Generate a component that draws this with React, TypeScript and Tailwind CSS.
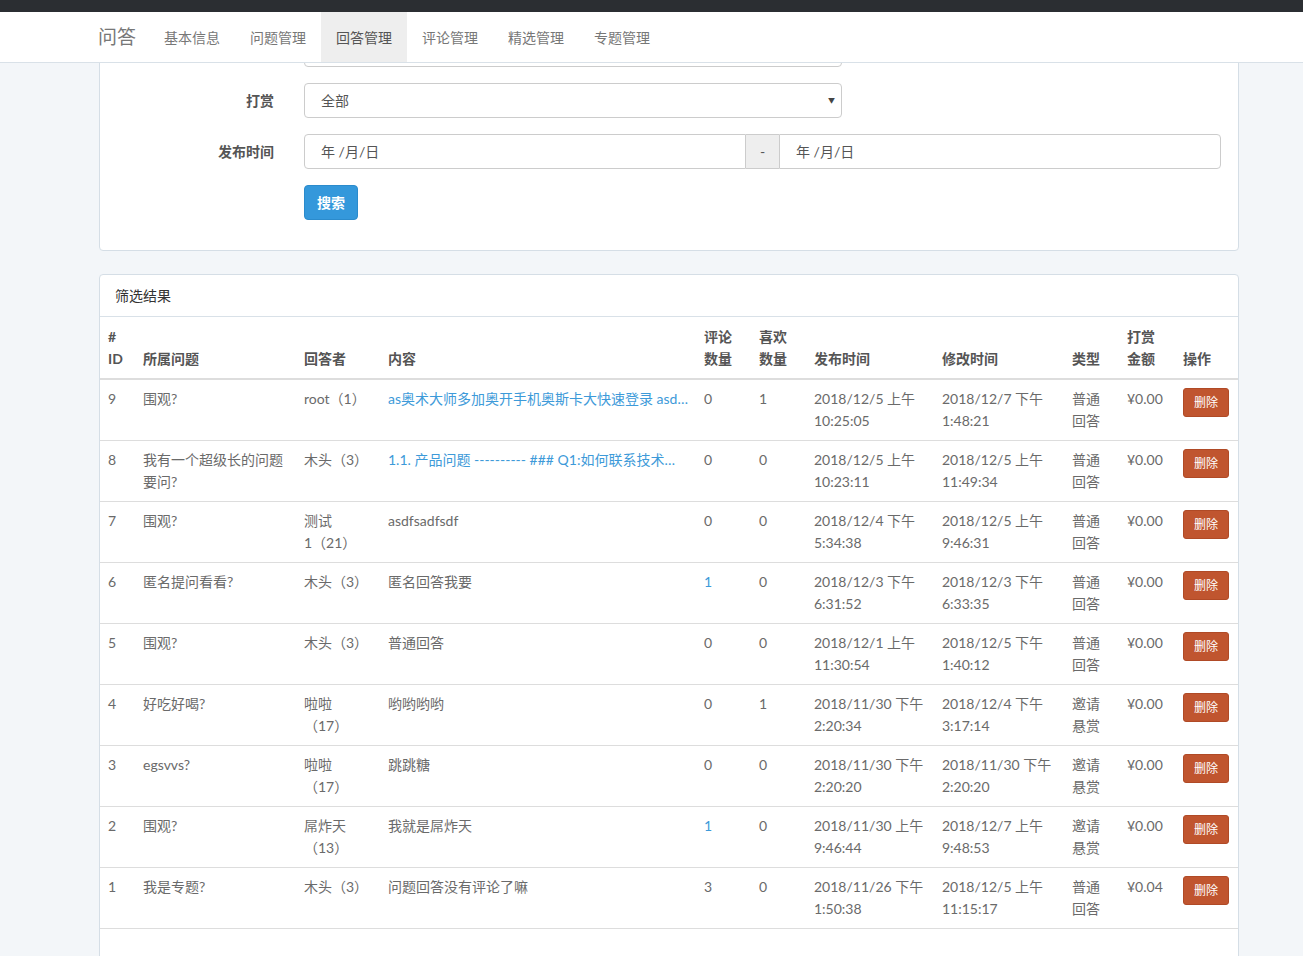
const FONT = { fontFamily: '"Lato", "Noto Sans CJK SC", sans-serif' };

type Row = {
  id: string;
  q: string;
  a: string[];
  c: string;
  cLink?: boolean;
  cm: string;
  cmLink?: boolean;
  like: string;
  pub: string[];
  mod: string[];
  type: string;
  amt: string;
};

const rows: Row[] = [
  { id: '9', q: '围观?', a: ['root（1）'], c: 'as奥术大师多加奥开手机奥斯卡大快速登录 asdasdasdasd', cLink: true, cm: '0', like: '1', pub: ['2018/12/5 上午', '10:25:05'], mod: ['2018/12/7 下午', '1:48:21'], type: '普通回答', amt: '¥0.00' },
  { id: '8', q: '我有一个超级长的问题要问?', a: ['木头（3）'], c: '1.1. 产品问题 ---------- ### Q1:如何联系技术支持', cLink: true, cm: '0', like: '0', pub: ['2018/12/5 上午', '10:23:11'], mod: ['2018/12/5 上午', '11:49:34'], type: '普通回答', amt: '¥0.00' },
  { id: '7', q: '围观?', a: ['测试', '1（21）'], c: 'asdfsadfsdf', cm: '0', like: '0', pub: ['2018/12/4 下午', '5:34:38'], mod: ['2018/12/5 上午', '9:46:31'], type: '普通回答', amt: '¥0.00' },
  { id: '6', q: '匿名提问看看?', a: ['木头（3）'], c: '匿名回答我要', cm: '1', cmLink: true, like: '0', pub: ['2018/12/3 下午', '6:31:52'], mod: ['2018/12/3 下午', '6:33:35'], type: '普通回答', amt: '¥0.00' },
  { id: '5', q: '围观?', a: ['木头（3）'], c: '普通回答', cm: '0', like: '0', pub: ['2018/12/1 上午', '11:30:54'], mod: ['2018/12/5 下午', '1:40:12'], type: '普通回答', amt: '¥0.00' },
  { id: '4', q: '好吃好喝?', a: ['啦啦', '（17）'], c: '哟哟哟哟', cm: '0', like: '1', pub: ['2018/11/30 下午', '2:20:34'], mod: ['2018/12/4 下午', '3:17:14'], type: '邀请悬赏', amt: '¥0.00' },
  { id: '3', q: 'egsvvs?', a: ['啦啦', '（17）'], c: '跳跳糖', cm: '0', like: '0', pub: ['2018/11/30 下午', '2:20:20'], mod: ['2018/11/30 下午', '2:20:20'], type: '邀请悬赏', amt: '¥0.00' },
  { id: '2', q: '围观?', a: ['屌炸天', '（13）'], c: '我就是屌炸天', cm: '1', cmLink: true, like: '0', pub: ['2018/11/30 上午', '9:46:44'], mod: ['2018/12/7 上午', '9:48:53'], type: '邀请悬赏', amt: '¥0.00' },
  { id: '1', q: '我是专题?', a: ['木头（3）'], c: '问题回答没有评论了嘛', cm: '3', like: '0', pub: ['2018/11/26 下午', '1:50:38'], mod: ['2018/12/5 上午', '11:15:17'], type: '普通回答', amt: '¥0.04' },
];

const navItems = ['基本信息', '问题管理', '回答管理', '评论管理', '精选管理', '专题管理'];

function Lines({ items }: { items: string[] }) {
  return (
    <>
      {items.map((t, i) => (
        <div key={i} className="whitespace-nowrap">
          {t}
        </div>
      ))}
    </>
  );
}

function Select({ value, width }: { value: string; width: string }) {
  return (
    <div className={`${width} h-[35px] border border-[#cccccc] rounded-[4px] bg-white flex items-center justify-between pl-4 pr-[6px] text-[14px] text-[#555]`}>
      <span>{value}</span>
      <span className="text-[7px] text-[#444]">▼</span>
    </div>
  );
}

export default function App() {
  return (
    <div style={FONT} className="w-[1303px] h-[956px] overflow-hidden bg-[#f3f6f9] text-[14px]">
      {/* top bar */}
      <div className="h-[12px] bg-[#2b2e32]" />

      {/* nav */}
      <div className="h-[51px] bg-white border-b border-[#d9e1e8] flex pl-[83px]">
        <div className="pl-[15px] pr-[13px] flex items-center text-[19px] text-[#777]">问答</div>
        {navItems.map((n) => (
          <div
            key={n}
            className={`px-[15px] flex items-center ${n === '回答管理' ? 'bg-[#eeeeee] text-[#555]' : 'text-[#777]'}`}
          >
            {n}
          </div>
        ))}
      </div>

      {/* scrolled content */}
      <div className="h-[893px] overflow-hidden">
        <div className="mt-[-52px] pl-[99px]">
          {/* filter panel */}
          <div className="w-[1140px] bg-white border border-[#d5dee6] rounded-[4px] pt-[20px] pb-[30px] flex flex-col gap-4">
            <div className="flex items-center">
              <div className="w-[174px] text-right font-bold text-[#555]">类型</div>
              <div className="ml-[30px]">
                <Select value="全部" width="w-[538px]" />
              </div>
            </div>
            <div className="flex items-center">
              <div className="w-[174px] text-right font-bold text-[#555]">打赏</div>
              <div className="ml-[30px]">
                <Select value="全部" width="w-[538px]" />
              </div>
            </div>
            <div className="flex items-center">
              <div className="w-[174px] text-right font-bold text-[#555]">发布时间</div>
              <div className="ml-[30px] flex h-[35px] w-[917px]">
                <div className="flex-1 border border-[#cccccc] rounded-l-[4px] flex items-center pl-4 text-[#555]">年 /月/日</div>
                <div className="w-[33px] border-y border-[#cccccc] bg-[#eeeeee] flex items-center justify-center text-[#555]">-</div>
                <div className="flex-1 border border-[#cccccc] rounded-r-[4px] flex items-center pl-4 text-[#555]">年 /月/日</div>
              </div>
            </div>
            <div className="flex">
              <div className="w-[174px]" />
              <button className="ml-[30px] h-[35px] w-[54px] bg-[#3498db] border border-[#2b8bcc] rounded-[4px] text-white font-bold">
                搜索
              </button>
            </div>
          </div>

          {/* results panel */}
          <div className="mt-[23px] w-[1140px] bg-white border border-[#d5dee6] rounded-[4px]">
            <div className="h-[42px] px-[15px] flex items-center border-b border-[#d9e1e8] text-[#333]">筛选结果</div>
            <table className="table-fixed w-[1138px] border-collapse leading-[22px]">
              <colgroup>
                <col className="w-[35px]" />
                <col className="w-[161px]" />
                <col className="w-[84px]" />
                <col className="w-[316px]" />
                <col className="w-[55px]" />
                <col className="w-[55px]" />
                <col className="w-[128px]" />
                <col className="w-[130px]" />
                <col className="w-[55px]" />
                <col className="w-[56px]" />
                <col className="w-[63px]" />
              </colgroup>
              <thead>
                <tr className="border-b-2 border-[#dddddd] text-left text-[#555] font-bold align-bottom">
                  <th className="px-2 pt-[9px] pb-2">
                    #<br />ID
                  </th>
                  <th className="px-2 pt-[9px] pb-2">所属问题</th>
                  <th className="px-2 pt-[9px] pb-2">回答者</th>
                  <th className="px-2 pt-[9px] pb-2">内容</th>
                  <th className="px-2 pt-[9px] pb-2">评论数量</th>
                  <th className="px-2 pt-[9px] pb-2">喜欢数量</th>
                  <th className="px-2 pt-[9px] pb-2">发布时间</th>
                  <th className="px-2 pt-[9px] pb-2">修改时间</th>
                  <th className="px-2 pt-[9px] pb-2">类型</th>
                  <th className="px-2 pt-[9px] pb-2">打赏金额</th>
                  <th className="px-2 pt-[9px] pb-2">操作</th>
                </tr>
              </thead>
              <tbody className="text-[#6a6a6a]">
                {rows.map((r) => (
                  <tr key={r.id} className="border-b border-[#dddddd] align-top h-[61px]">
                    <td className="p-2">{r.id}</td>
                    <td className="p-2">{r.q}</td>
                    <td className="p-2">
                      <Lines items={r.a} />
                    </td>
                    <td className="p-2">
                      <div className={`truncate ${r.cLink ? 'text-[#3d9ad9]' : ''}`}>{r.c}</div>
                    </td>
                    <td className={`p-2 ${r.cmLink ? 'text-[#3d9ad9]' : ''}`}>{r.cm}</td>
                    <td className="p-2">{r.like}</td>
                    <td className="p-2">
                      <Lines items={r.pub} />
                    </td>
                    <td className="p-2">
                      <Lines items={r.mod} />
                    </td>
                    <td className="p-2">{r.type}</td>
                    <td className="p-2 whitespace-nowrap">{r.amt}</td>
                    <td className="p-2">
                      <button className="h-[29px] w-[46px] bg-[#c0552f] border border-[#b04a26] rounded-[3px] text-white text-[12px]">
                        删除
                      </button>
                    </td>
                  </tr>
                ))}
              </tbody>
            </table>
            <div className="h-[40px]" />
          </div>
        </div>
      </div>
    </div>
  );
}
